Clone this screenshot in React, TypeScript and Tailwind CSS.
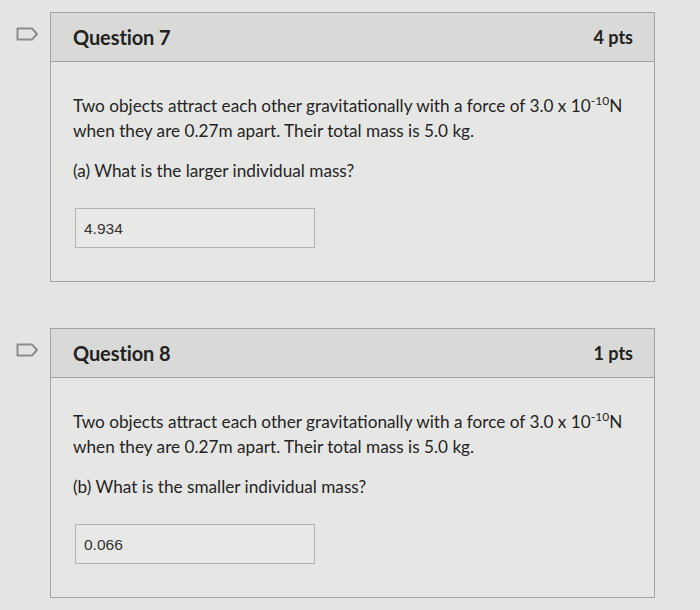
import React from "react";

type Q = {
  num: number;
  pts: string;
  part: string;
  answer: string;
};

const questions: Q[] = [
  { num: 7, pts: "4 pts", part: "(a) What is the larger individual mass?", answer: "4.934" },
  { num: 8, pts: "1 pts", part: "(b) What is the smaller individual mass?", answer: "0.066" },
];

function Flag() {
  return (
    <svg width="23" height="14" viewBox="0 0 23 14" className="block">
      <path d="M1.5 1.5 H16 L21 7 L16 12.5 H1.5 Z" fill="none" stroke="#8c8d8b" strokeWidth="2" strokeLinejoin="round" />
    </svg>
  );
}

function QuestionCard({ q }: { q: Q }) {
  return (
    <div className="flex">
      <div className="w-[50px] shrink-0 pt-[15px] pl-[16px]">
        <Flag />
      </div>
      <div className="w-[605px] h-[270px] border border-[#a3a4a1] bg-[#e6e7e4] flex flex-col">
        <div className="h-[49px] shrink-0 bg-[#d9dad7] border-b border-[#a3a4a1] flex items-center justify-between pl-[22px] pr-[21px]">
          <span className="text-[20px] font-bold text-[#222] tracking-[-0.1px]">Question {q.num}</span>
          <span className="text-[18px] font-bold text-[#222]">{q.pts}</span>
        </div>
        <div className="pl-[22px] pt-[31px] text-[17.2px] leading-[25px] text-[#242424]">
          <p>
            Two objects attract each other gravitationally with a force of 3.0 x 10
            <sup className="text-[12px] top-[-0.6em]">-10</sup>N
            <br />
            when they are 0.27m apart. Their total mass is 5.0 kg.
          </p>
          <p className="mt-[15px]">{q.part}</p>
          <div className="mt-[25px] ml-[2px] w-[240px] h-[40px] border border-[#b3b4b1] bg-[#e8e9e6] flex items-center pl-[8px] text-[15.5px] text-[#333] font-['Liberation_Sans',Arial,sans-serif]">
            {q.answer}
          </div>
        </div>
      </div>
    </div>
  );
}

export default function App() {
  return (
    <div className="w-[700px] h-[610px] bg-[#e4e5e2] font-['Lato','Noto_Sans',sans-serif] pt-[12px] flex flex-col gap-[46px] overflow-hidden">
      {questions.map((q) => (
        <QuestionCard key={q.num} q={q} />
      ))}
    </div>
  );
}
